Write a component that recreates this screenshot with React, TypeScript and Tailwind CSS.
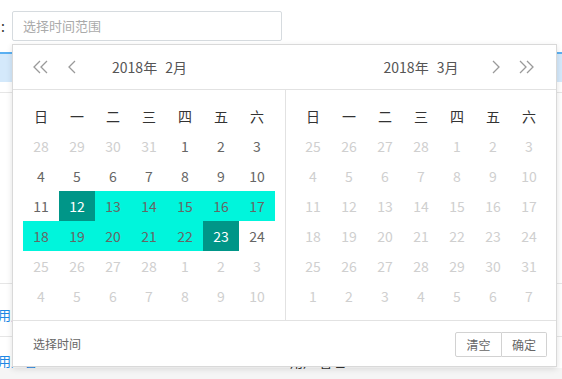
import React from "react";

type Cell = { d: number; t: "o" | "n" | "s" | "r" | "e" | "g" };

const font = { fontFamily: '"Noto Sans CJK SC", "Noto Sans", sans-serif' };

const leftRows: Cell[][] = [
  [28, 29, 30, 31].map((d) => ({ d, t: "o" as const })).concat([1, 2, 3].map((d) => ({ d, t: "n" as const }))),
  [4, 5, 6, 7, 8, 9, 10].map((d) => ({ d, t: "n" as const })),
  [
    { d: 11, t: "n" },
    { d: 12, t: "s" },
    ...[13, 14, 15, 16, 17].map((d) => ({ d, t: "r" as const })),
  ],
  [
    ...[18, 19, 20, 21, 22].map((d) => ({ d, t: "r" as const })),
    { d: 23, t: "e" },
    { d: 24, t: "n" },
  ],
  [25, 26, 27, 28, 1, 2, 3].map((d) => ({ d, t: "o" as const })),
  [4, 5, 6, 7, 8, 9, 10].map((d) => ({ d, t: "o" as const })),
];

const rightRows: Cell[][] = [
  [25, 26, 27, 28, 1, 2, 3],
  [4, 5, 6, 7, 8, 9, 10],
  [11, 12, 13, 14, 15, 16, 17],
  [18, 19, 20, 21, 22, 23, 24],
  [25, 26, 27, 28, 29, 30, 31],
  [1, 2, 3, 4, 5, 6, 7],
].map((r) => r.map((d) => ({ d, t: "o" as const })));

const weekdays = ["日", "一", "二", "三", "四", "五", "六"];

function cellClass(t: Cell["t"]) {
  switch (t) {
    case "o":
    case "g":
      return "text-[#cfcfcf]";
    case "n":
      return "text-[#666666]";
    case "r":
      return "bg-[#00f5dc] text-[#666666]";
    case "s":
    case "e":
      return "bg-[#009688] text-white";
  }
}

function Grid({ rows }: { rows: Cell[][] }) {
  return (
    <div className="flex flex-col">
      <div className="flex">
        {weekdays.map((w) => (
          <div key={w} className="w-[36px] h-[30px] flex items-center justify-center text-[14px] text-[#333333]">
            {w}
          </div>
        ))}
      </div>
      {rows.map((r, i) => (
        <div key={i} className="flex">
          {r.map((c, j) => (
            <div
              key={j}
              className={`w-[36px] h-[30px] flex items-center justify-center text-[14px] ${cellClass(c.t)}`}
            >
              {c.d}
            </div>
          ))}
        </div>
      ))}
    </div>
  );
}

function DoubleLeft() {
  return (
    <svg width="18" height="14" viewBox="0 0 18 14" fill="none" stroke="#9a9a9a" strokeWidth="1.3">
      <path d="M8 1 L2 7 L8 13" />
      <path d="M15 1 L9 7 L15 13" />
    </svg>
  );
}
function DoubleRight() {
  return (
    <svg width="18" height="14" viewBox="0 0 18 14" fill="none" stroke="#9a9a9a" strokeWidth="1.3">
      <path d="M3 1 L9 7 L3 13" />
      <path d="M10 1 L16 7 L10 13" />
    </svg>
  );
}
function SingleLeft() {
  return (
    <svg width="10" height="14" viewBox="0 0 10 14" fill="none" stroke="#9a9a9a" strokeWidth="1.3">
      <path d="M8 1 L2 7 L8 13" />
    </svg>
  );
}
function SingleRight() {
  return (
    <svg width="10" height="14" viewBox="0 0 10 14" fill="none" stroke="#9a9a9a" strokeWidth="1.3">
      <path d="M2 1 L8 7 L2 13" />
    </svg>
  );
}

function Title({ m }: { m: string }) {
  return (
    <div className="text-[14px] text-[#555555] flex items-center">
      <span>2018年</span>
      <span className="ml-[8px]">{m}</span>
    </div>
  );
}

export default function App() {
  return (
    <div className="relative w-[562px] h-[379px] overflow-hidden bg-white" style={font}>
      {/* background page */}
      <div className="flex flex-col">
        <div className="h-[52px] flex items-center">
          <span className="text-[14px] text-[#333333] w-[12px] pl-[1px]">:</span>
          <div className="w-[270px] h-[30px] border border-[#d6dbdf] rounded-[2px] flex items-center pl-[10px] text-[13px] text-[#aaaaaa]">
            选择时间范围
          </div>
        </div>
        <div className="h-[30px] border-t-2 border-[#5ab0f2] bg-[#d4e9fb]" />
        <div className="h-[11px] border-b border-[#e6e6e6]" />
        <div className="h-[191px] border-b border-[#e6e6e6]" />
        <div className="h-[53px] border-b border-[#e6e6e6] flex items-center pt-[10px]">
          <span className="-ml-[2px] text-[13px] text-[#1e88e5]">用户管理</span>
        </div>
        <div className="h-[31px] flex items-end">
          <span className="-ml-[2px] text-[13px] text-[#1e88e5] leading-[16px] mb-[-1px]">用户管理</span>
        </div>
        <div className="h-[20px] bg-[#f5f5f5] flex">
          <span className="ml-[290px] -mt-[14px] text-[13px] text-[#333333] leading-[16px]">用户 管理</span>
        </div>
      </div>

      {/* popup */}
      <div className="absolute left-[12px] top-[44px] w-[545px] bg-white border border-[#d9d9d9] shadow-[0_2px_6px_rgba(0,0,0,0.12)] flex flex-col">
        <div className="h-[45px] border-b border-[#e2e2e2] flex">
          <div className="w-[273px] relative flex items-center justify-center">
            <div className="absolute left-[19px] top-[15px]">
              <DoubleLeft />
            </div>
            <div className="absolute left-[54px] top-[15px]">
              <SingleLeft />
            </div>
            <Title m="2月" />
          </div>
          <div className="flex-1 relative flex items-center justify-center">
            <Title m="3月" />
            <div className="absolute left-[205px] top-[15px]">
              <SingleRight />
            </div>
            <div className="absolute left-[231px] top-[15px]">
              <DoubleRight />
            </div>
          </div>
        </div>
        <div className="flex">
          <div className="w-[273px] border-r border-[#e2e2e2] pl-[10px] pt-[11px] pb-[9px]">
            <Grid rows={leftRows} />
          </div>
          <div className="flex-1 pl-[9px] pt-[11px] pb-[9px]">
            <Grid rows={rightRows} />
          </div>
        </div>
        <div className="h-[46px] border-t border-[#e2e2e2] flex items-center justify-between pl-[20px] pr-[9px]">
          <span className="text-[12px] text-[#666666]">选择时间</span>
          <div className="flex mt-[2px]">
            <div className="w-[47px] h-[25px] border border-[#d2d2d2] rounded-l-[2px] flex items-center justify-center text-[12px] text-[#666666]">
              清空
            </div>
            <div className="w-[45px] h-[25px] border border-l-0 border-[#d2d2d2] rounded-r-[2px] flex items-center justify-center text-[12px] text-[#666666]">
              确定
            </div>
          </div>
        </div>
      </div>
    </div>
  );
}
